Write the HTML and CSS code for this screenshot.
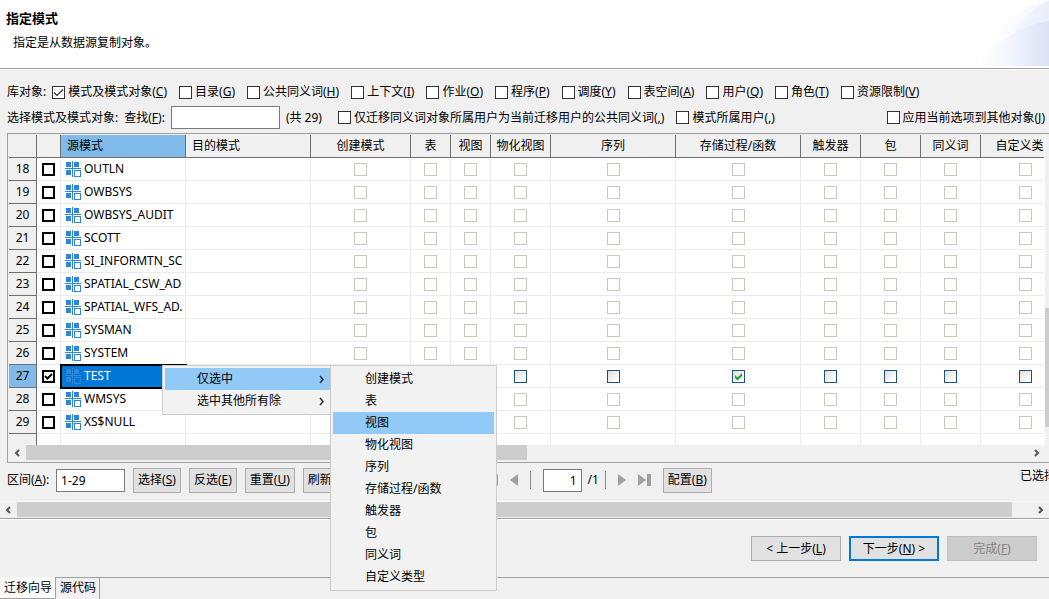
FILE: index.html
```html
<!DOCTYPE html>
<html lang="zh-CN">
<head>
    <meta charset="UTF-8">
    <meta name="viewport" content="width=device-width, initial-scale=1.0">
    <title>迁移向导</title>
    <link rel="stylesheet" href="styles.css">
</head>
<body>
    <header class="banner">
        <div class="banner_text">
            <h1>指定模式</h1>
            <p>指定是从数据源复制对象。</p>
        </div>
        <svg class="banner_art" width="74" height="66" viewBox="0 0 74 66" aria-hidden="true">
            <defs>
                <linearGradient id="fadeLight" x1="0" x2="1">
                    <stop offset="0" stop-color="#ffffff"/>
                    <stop offset="1" stop-color="#f3f6fd"/>
                </linearGradient>
                <linearGradient id="fadeMid" x1="0" x2="1">
                    <stop offset="0" stop-color="#fafbff"/>
                    <stop offset="1" stop-color="#e8eefa"/>
                </linearGradient>
                <linearGradient id="fadeDark" x1="0" x2="1">
                    <stop offset="0" stop-color="#ffffff"/>
                    <stop offset="0.4" stop-color="#f4f7fe"/>
                    <stop offset="1" stop-color="#dae2f5"/>
                </linearGradient>
            </defs>
            <path d="M3 66C14 36 40 8 74 0V66Z" fill="url(#fadeLight)"/>
            <path d="M27 66C32 36 48 12 74 1V66Z" fill="url(#fadeMid)"/>
            <path d="M3 66C20 42 46 25 74 21V66Z" fill="url(#fadeDark)"/>
        </svg>
    </header>

    <main>
        <div class="options">
            <span>库对象:</span>
            <label><input type="checkbox" class="chk" checked>模式及模式对象(<u>C</u>)</label>
            <label><input type="checkbox" class="chk">目录(<u>G</u>)</label>
            <label><input type="checkbox" class="chk">公共同义词(<u>H</u>)</label>
            <label><input type="checkbox" class="chk">上下文(<u>I</u>)</label>
            <label><input type="checkbox" class="chk">作业(<u>O</u>)</label>
            <label><input type="checkbox" class="chk">程序(<u>P</u>)</label>
            <label><input type="checkbox" class="chk">调度(<u>Y</u>)</label>
            <label><input type="checkbox" class="chk">表空间(<u>A</u>)</label>
            <label><input type="checkbox" class="chk">用户(<u>Q</u>)</label>
            <label><input type="checkbox" class="chk">角色(<u>T</u>)</label>
            <label><input type="checkbox" class="chk">资源限制(<u>V</u>)</label>
        </div>
        <div class="search">
            <span>选择模式及模式对象:</span>
            <label for="find">查找(<u>F</u>):</label>
            <input type="text" id="find" class="field find">
            <span class="count">(共 29)</span>
            <label class="opt"><input type="checkbox" class="chk">仅迁移同义词对象所属用户为当前迁移用户的公共同义词(<u>,</u>)</label>
            <label class="opt"><input type="checkbox" class="chk">模式所属用户(<u>,</u>)</label>
            <label class="opt last"><input type="checkbox" class="chk">应用当前选项到其他对象(<u>J</u>)</label>
        </div>

        <div class="grid_wrap">
            <div class="grid_view">
                <div class="grid_clip">
                    <table class="grid">
                        <colgroup>
                            <col class="w28"><col class="w24"><col class="w125"><col class="w125"><col class="w100">
                            <col class="w40"><col class="w40"><col class="w60"><col class="w125"><col class="w125">
                            <col class="w60"><col class="w60"><col class="w60"><col class="w90">
                        </colgroup>
                        <thead>
                            <tr>
                                <th></th><th></th><th class="left active">源模式</th><th class="left">目的模式</th>
                                <th>创建模式</th><th>表</th><th>视图</th><th>物化视图</th><th>序列</th>
                                <th>存储过程/函数</th><th>触发器</th><th>包</th><th>同义词</th><th>自定义类型</th>
                            </tr>
                        </thead>
                        <tbody id="rows"></tbody>
                    </table>
                </div>
                <div class="vbar"><div class="vthumb"></div></div>
            </div>
            <div class="hbar grid_bar">
                <svg width="17" height="16" viewBox="0 0 17 16"><path d="M10 5L7 8L10 11" class="arrow"/></svg>
                <div class="hthumb short"></div>
                <svg class="end" width="17" height="16" viewBox="0 0 17 16"><path d="M7 5L10 8L7 11" class="arrow"/></svg>
            </div>
        </div>

        <div class="pager">
            <label for="range">区间(<u>A</u>):</label>
            <input type="text" id="range" class="field range" value="1-29">
            <button type="button" class="btn">选择(<u>S</u>)</button>
            <button type="button" class="btn">反选(<u>E</u>)</button>
            <button type="button" class="btn">重置(<u>U</u>)</button>
            <button type="button" class="btn">刷新(<u>R</u>)</button>
            <div class="pages">
                <button type="button" class="nav" aria-label="首页"><svg width="13" height="12" viewBox="0 0 13 12"><path d="M0 0H4V12H0ZM13 0V12L5 6Z"/></svg></button>
                <button type="button" class="nav" aria-label="上一页"><svg width="8" height="12" viewBox="0 0 8 12"><path d="M8 0V12L0 6Z"/></svg></button>
                <i class="sep"></i>
                <input type="text" class="field page" value="1" aria-label="页码">
                <span class="total">/1</span>
                <i class="sep"></i>
                <button type="button" class="nav" aria-label="下一页"><svg width="8" height="12" viewBox="0 0 8 12"><path d="M0 0V12L8 6Z"/></svg></button>
                <button type="button" class="nav" aria-label="末页"><svg width="13" height="12" viewBox="0 0 13 12"><path d="M0 0V12L8 6ZM9 0H13V12H9Z"/></svg></button>
                <button type="button" class="btn">配置(<u>B</u>)</button>
            </div>
            <span class="status">已选择</span>
        </div>
        <div class="hbar page_bar">
            <svg width="17" height="16" viewBox="0 0 17 16"><path d="M10 5L7 8L10 11" class="arrow"/></svg>
            <div class="hthumb long"></div>
            <svg class="end" width="17" height="16" viewBox="0 0 17 16"><path d="M7 5L10 8L7 11" class="arrow"/></svg>
        </div>
    </main>

    <div class="actions">
        <button type="button" class="btn wide">&lt; 上一步(<u>L</u>)</button>
        <button type="button" class="btn wide primary">下一步(<u>N</u>) &gt;</button>
        <button type="button" class="btn wide" disabled>完成(<u>F</u>)</button>
    </div>

    <nav class="tabs">
        <a href="#" class="on">迁移向导</a>
        <a href="#">源代码</a>
    </nav>

    <ul class="menu context">
        <li class="on"><a href="#">仅选中</a><svg width="6" height="9" viewBox="0 0 6 9"><path d="M1 1L4 4.500L1 8" class="chevron"/></svg></li>
        <li><a href="#">选中其他所有除</a><svg width="6" height="9" viewBox="0 0 6 9"><path d="M1 1L4 4.500L1 8" class="chevron"/></svg></li>
    </ul>
    <ul class="menu submenu">
        <li><a href="#">创建模式</a></li>
        <li><a href="#">表</a></li>
        <li class="on"><a href="#">视图</a></li>
        <li><a href="#">物化视图</a></li>
        <li><a href="#">序列</a></li>
        <li><a href="#">存储过程/函数</a></li>
        <li><a href="#">触发器</a></li>
        <li><a href="#">包</a></li>
        <li><a href="#">同义词</a></li>
        <li><a href="#">自定义类型</a></li>
    </ul>

    <script>
        var names = ['OUTLN','OWBSYS','OWBSYS_AUDIT','SCOTT','SI_INFORMTN_SC','SPATIAL_CSW_AD','SPATIAL_WFS_AD.','SYSMAN','SYSTEM','TEST','WMSYS','XS$NULL'];
        var cols = ['创建模式','表','视图','物化视图','序列','存储过程/函数','触发器','包','同义词','自定义类型'];
        var icon = '<svg class="schema" width="16" height="16" viewBox="0 0 16 16" aria-hidden="true">' +
            '<path d="M1 1H6V6H1ZM9 1H14V6H9ZM1 9H6V14H1ZM7 0H8V16H7ZM0 7H16V8H0Z"/>' +
            '<path d="M9 9H16V16H9ZM10 10V15H15V10Z" fill-rule="evenodd"/></svg>';
        var html = '';

        for(var i=0;i<names.length;i++){
            var on = names[i] == 'TEST';
            html += '<tr' + (on ? ' class="sel"' : '') + '><th>' + (18 + i) + '</th>';
            html += '<td class="mid"><input type="checkbox" class="pick" aria-label="' + names[i] + '"' + (on ? ' checked' : '') + '></td>';
            html += '<td class="name"><div>' + icon + '<span>' + names[i] + '</span></div></td><td></td>';
            for(var j=0;j<cols.length;j++){
                html += '<td class="mid"><input type="checkbox" class="cell" aria-label="' + names[i] + ' ' + cols[j] + '"';
                html += (on ? (j == 5 ? ' checked' : '') : ' disabled') + '></td>';
            }
            html += '</tr>';
        }
        // 末尾的空行
        html += '<tr class="rest"><th></th>';
        for(var k=0;k<13;k++){
            html += '<td></td>';
        }
        html += '</tr>';
        document.getElementById('rows').innerHTML = html;
    </script>
</body>
</html>
```

FILE: styles.css
```css
* {
    margin: 0;
    padding: 0;
    box-sizing: border-box;
}

body {
    position: relative;
    display: flex;
    flex-direction: column;
    min-height: 100vh;
    overflow: hidden;
    background: #f0f0f0;
    color: #000;
    font: 12px/16px "Noto Sans", "Noto Sans CJK SC", sans-serif;
    white-space: nowrap;
}

input,
button {
    font: inherit;
    color: inherit;
}

a {
    color: inherit;
    text-decoration: none;
}

u {
    text-underline-offset: 1px;
}

svg {
    display: block;
    flex: none;
}

/* 标题 */
.banner {
    display: flex;
    justify-content: space-between;
    height: 70px;
    background: #fff;
    border-bottom: 1px solid #fff;
    box-shadow: inset 0 -1px 0 #a0a0a0;
}

.banner_text {
    padding: 10px 6px;
}

h1 {
    font-size: 13px;
    line-height: 16px;
}

.banner p {
    padding: 9px 7px;
}

/* 选项 */
.options,
.search {
    display: flex;
    align-items: center;
    padding-left: 7px;
}

.options {
    gap: 12px;
    padding-top: 14px;
}

.options span {
    margin-right: -6px;
}

.options label,
.opt {
    display: flex;
    align-items: center;
}

.chk {
    appearance: none;
    flex: none;
    width: 13px;
    height: 13px;
    margin-right: 3px;
    background: #fff;
    border: 1px solid #333;
}

.chk:checked {
    background: #fff url("data:image/svg+xml,%3Csvg xmlns='http://www.w3.org/2000/svg' viewBox='0 0 11 11'%3E%3Cpath d='M1 5.500L4 8.500L10 2.500' fill='none' stroke='%23333' stroke-width='1.200'/%3E%3C/svg%3E");
}

.search {
    gap: 6px;
    padding: 6px 4px 4px 7px;
}

.field {
    height: 23px;
    padding: 0 4px;
    background: #fff;
    border: 1px solid #7a7a7a;
    outline: none;
}

.find {
    width: 109px;
}

.count {
    margin-right: 10px;
}

.opt {
    margin-right: 6px;
}

.last {
    margin-left: auto;
    margin-right: 0;
}

/* 表格 */
.grid_wrap {
    margin-left: 7px;
    padding: 1px 0 1px 1px;
    border: 1px solid #a0a0a0;
    border-right: none;
    background: #f0f0f0;
}

.grid_view {
    display: flex;
}

.grid_clip {
    flex: 1;
    min-width: 0;
    overflow: hidden;
    background: #fff;
}

.grid {
    width: 1062px;
    table-layout: fixed;
    border-collapse: separate;
    border-spacing: 0;
}

.w24 { width: 24px; }
.w28 { width: 28px; }
.w40 { width: 40px; }
.w60 { width: 60px; }
.w90 { width: 90px; }
.w100 { width: 100px; }
.w125 { width: 125px; }

.grid th {
    height: 23px;
    font-weight: normal;
    background: #f0f0f0;
    border-right: 1px solid #6e6e6e;
    border-bottom: 1px solid #6e6e6e;
}

.grid .left {
    padding-left: 6px;
    text-align: left;
}

.grid .active,
.grid .sel th {
    background: #80baea;
}

.grid td {
    height: 23px;
    border-right: 1px solid #ebebeb;
    border-bottom: 1px solid #ebebeb;
}

.grid .rest th,
.grid .rest td {
    height: 11px;
    border-bottom: none;
}

.mid {
    text-align: center;
}

.mid input {
    appearance: none;
    display: block;
    width: 13px;
    height: 13px;
    margin: 0 auto;
}

.pick {
    background: #fff;
    border: 2px solid #000;
}

.pick:checked {
    background: #fff url("data:image/svg+xml,%3Csvg xmlns='http://www.w3.org/2000/svg' viewBox='0 0 9 9'%3E%3Cpath d='M1 4L3.500 6.500L8 2' fill='none' stroke='%23000' stroke-width='2'/%3E%3C/svg%3E");
}

.cell {
    background: linear-gradient(135deg, #dcdcd7, #fff 80%);
    border: 1px solid #1c5180;
}

.cell:checked {
    background: url("data:image/svg+xml,%3Csvg xmlns='http://www.w3.org/2000/svg' viewBox='0 0 11 11'%3E%3Cpath d='M2 4L4.500 6.500L9 2V5L4.500 9.500L2 7Z' fill='%2321a121'/%3E%3C/svg%3E"), linear-gradient(135deg, #dcdcd7, #fff 80%);
}

.cell:disabled {
    background: #fff;
    border-color: #cac8bb;
}

.name div {
    display: flex;
    align-items: center;
    gap: 3px;
    padding-left: 4px;
}

.schema {
    fill: #2f86d6;
}

.sel .name {
    position: relative;
    background: #0078d7;
    color: #fff;
    outline: 2px solid #000;
    outline-offset: -1px;
}

/* 滚动条 */
.vbar {
    flex: none;
    display: flex;
    flex-direction: column;
    width: 5px;
    padding-top: 173px;
    border-left: 1px solid #fff;
}

.vthumb {
    height: 119px;
    background: #cdcdcd;
}

.hbar {
    display: flex;
    background: #f0f0f0;
}

.grid_bar {
    height: 16px;
    padding-right: 4px;
}

.hthumb {
    height: 15px;
    background: #cdcdcd;
}

.short {
    flex: 0 0 auto;
    width: 48.4%;
}

.long {
    flex: 1;
    margin-right: 20px;
}

.end {
    margin-left: auto;
}

.arrow {
    fill: none;
    stroke: #555;
    stroke-width: 2;
}

.page_bar {
    height: 19px;
    border-top: 1px solid #fff;
    border-bottom: 1px solid #fff;
    box-shadow: inset 0 -1px 0 #a0a0a0;
}

/* 分页 */
.pager {
    display: flex;
    align-items: center;
    gap: 8px;
    height: 38px;
    padding: 0 0 4px 7px;
}

.pager label {
    margin-right: -1px;
}

.range {
    width: 69px;
}

.btn {
    height: 25px;
    padding: 0 4px;
    background: #e1e1e1;
    border: 1px solid #adadad;
}

.pages {
    display: flex;
    align-items: center;
    gap: 12px;
    margin-left: 125px;
}

.nav {
    border: none;
    background: none;
}

.nav svg {
    fill: #a0a0a0;
}

.sep {
    width: 1px;
    height: 18px;
    background: #8a8a8a;
}

.page {
    width: 39px;
    text-align: right;
}

.total {
    margin: 0 -6px;
}

.status {
    flex: none;
    width: 29px;
    margin-left: auto;
    padding-bottom: 8px;
    overflow: hidden;
}

/* 按钮 */
.actions {
    display: flex;
    flex: 1;
    justify-content: flex-end;
    align-items: flex-start;
    gap: 8px;
    padding: 16px 12px 0;
}

.wide {
    width: 90px;
}

.primary {
    border: 2px solid #0078d7;
}

.btn:disabled {
    background: #ccc;
    border-color: #bfbfbf;
    color: #838383;
}

/* 标签 */
.tabs {
    display: flex;
    height: 22px;
    border-top: 1px solid #a0a0a0;
}

.tabs a {
    padding: 2px 3px 0 4px;
    border-right: 1px solid #a0a0a0;
}

.tabs .on {
    margin-top: -1px;
    padding-top: 3px;
    background: #fff;
    border-bottom: 1px solid #a0a0a0;
    border-bottom-right-radius: 2px;
}

/* 右键菜单 */
.menu {
    position: absolute;
    top: 365px;
    padding: 2px;
    background: #f2f2f2;
    border: 1px solid #ccc;
    list-style: none;
}

.context {
    left: 162px;
    width: 171px;
}

.submenu {
    left: 330px;
    width: 167px;
}

.menu li {
    display: flex;
    align-items: center;
    justify-content: space-between;
    height: 22px;
    padding: 0 5px 0 32px;
}

.menu .on {
    background: #91c9f7;
}

.chevron {
    fill: none;
    stroke: #333;
    stroke-width: 1.5;
}
```
